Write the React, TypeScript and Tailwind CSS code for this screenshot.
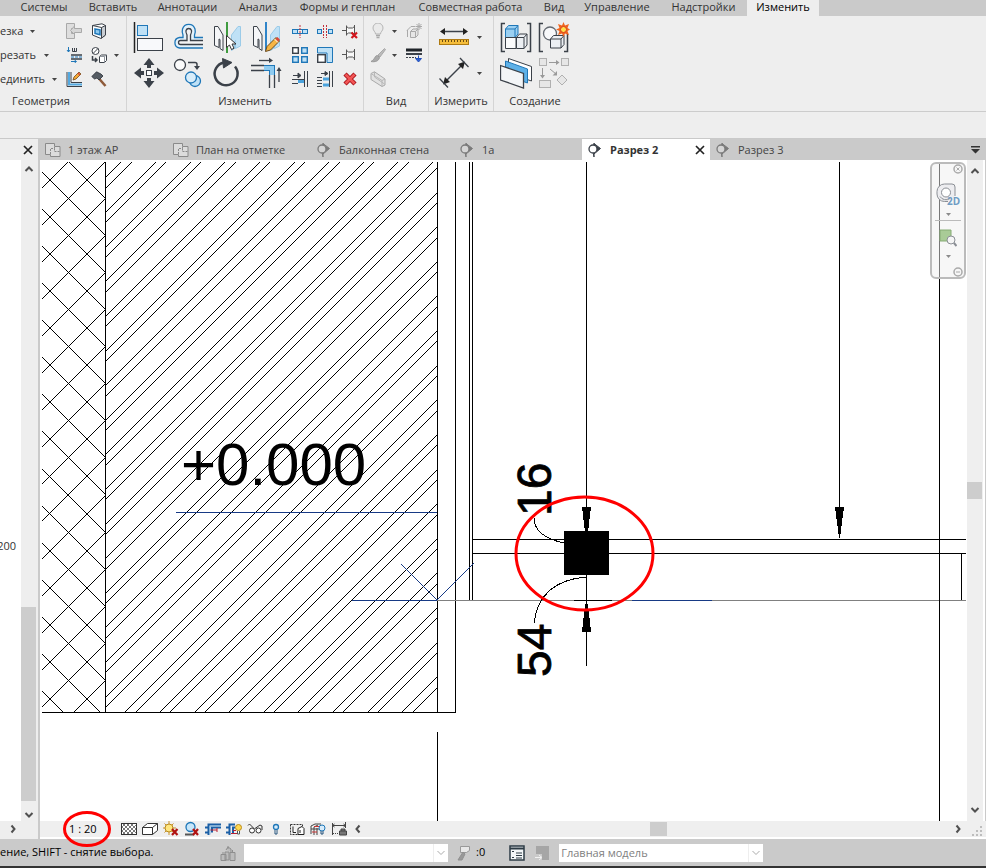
import type { ReactNode } from "react";

const ribbonTabs = [
  { label: "Системы", width: "w-[70px]" },
  { label: "Вставить", width: "w-[68px]" },
  { label: "Аннотации", width: "w-[81px]" },
  { label: "Анализ", width: "w-[60px]" },
  { label: "Формы и генплан", width: "w-[119px]" },
  { label: "Совместная работа", width: "w-[127px]" },
  { label: "Вид", width: "w-[40px]" },
  { label: "Управление", width: "w-[86px]" },
  { label: "Надстройки", width: "w-[87px]" },
  { label: "Изменить", width: "w-[72px]", active: true },
];

const viewTabs = [
  { label: "1 этаж АР", kind: "plan", width: "w-[128px]" },
  { label: "План на отметке", kind: "plan", width: "w-[143px]" },
  { label: "Балконная стена", kind: "section", width: "w-[143px]" },
  { label: "1а", kind: "section", width: "w-[128px]" },
  { label: "Разрез 2", kind: "section", width: "w-[128px]", active: true },
  { label: "Разрез 3", kind: "section", width: "w-[128px]" },
];

const INK = "#3b4149";
const BLUE = "#1f77b8";
const SKY = "#bfe1f6";
const GREY = "#a9a9a9";

function Icon({ size = 16, children }: { size?: number; children: ReactNode }) {
  return (
    <svg
      width={size}
      height={size}
      viewBox={`0 0 ${size} ${size}`}
      fill="none"
      stroke={INK}
      className="block shrink-0"
      aria-hidden="true"
    >
      {children}
    </svg>
  );
}

function Tool({ label, children }: { label: string; children: ReactNode }) {
  return (
    <button type="button" aria-label={label} title={label} className="block shrink-0">
      {children}
    </button>
  );
}

function Caret() {
  return (
    <svg width="5" height="3" viewBox="0 0 5 3" className="block shrink-0" aria-hidden="true">
      <path d="M0 0h5L2.5 3z" fill="#444" />
    </svg>
  );
}

function Chevron({ dir }: { dir: "up" | "down" | "left" | "right" }) {
  const paths = {
    up: "M1.5 7 5 3.5 8.5 7",
    down: "M1.5 3 5 6.5 8.5 3",
    left: "M6.5 1.5 3.5 5l3 3.5",
    right: "M3.5 1.5 6.5 5l-3 3.5",
  };
  return (
    <svg width="10" height="10" viewBox="0 0 10 10" fill="none" className="block shrink-0" aria-hidden="true">
      <path d={paths[dir]} stroke="#505050" strokeWidth="2" />
    </svg>
  );
}

/* ---------- ribbon icons, 16px ---------- */

const CutProfile = () => (
  <Icon>
    <path d="M.5.500h8v5h-3v5h3v5h-8z" fill="#dedede" stroke={GREY} />
    <path d="M8.5 5.500V3l-4 4.500 4 4V9.500h7v-4z" fill="#d6d6d6" stroke={GREY} />
  </Icon>
);

const Cope = () => (
  <Icon>
    <path d="M1.5 2.500 11 .8l3.500 1.700v9.500L10 15.500 1.500 12z" fill="#fff" />
    <path d="m10.500 4.500 4-2V12L10.500 15.200z" fill="#c9ced4" />
    <path d="m1.500 2.500 9 2" />
    <path d="m4 6 5 .8v5L4 10.500z" fill="#8cc8ee" stroke={BLUE} strokeWidth="1.5" />
  </Icon>
);

const WallJoins = () => (
  <Icon>
    <path d="M2.500 0v5M1 3l1.500 2L4 3" stroke={BLUE} />
    <path d="M6.500 1v3.500h4V1M8.500 1v3" />
    <path d="M5 8h11M5 12h11" strokeWidth="1.5" />
    <path d="M5 10h11" stroke={BLUE} strokeDasharray="3 1" />
    <path d="M5 14.500h5M8.500 13l2 1.500-2 1.500" stroke={BLUE} />
  </Icon>
);

const BeamJoins = () => (
  <Icon>
    <circle cx="4.5" cy="4" r="3.5" fill="#fff" />
    <path d="m2 6.500 5-5" />
    <path d="M1.500 9v4h4M4 11l2 2-2 2" strokeWidth="1.5" />
    <path d="M8.500 9.500 10.500 8h5v5.500l-2 2h-5z" fill="#fff" />
    <path d="M8.500 9.500h5v6m0-6 2-1.500" stroke="#8f959c" />
  </Icon>
);

const PaintJoin = () => (
  <Icon>
    <path d="M1 1v14.500h15M5 1v10.500h11" />
    <path d="M3 1v12.500h13" stroke="#54a9e0" strokeWidth="2" />
    <path d="m7 9 1-3 5-5 2 2-5 5z" fill="#f6a836" stroke="#6d4a1b" strokeWidth=".8" />
    <path d="m12 2 2 2" stroke="#d9463b" strokeWidth="1.5" />
  </Icon>
);

const Hammer = () => (
  <Icon>
    <path d="m7.500 7 7 8" stroke="#8e5a3a" strokeWidth="2.5" />
    <path d="M.8 5.500 5.500.8 10 3l2 2-4 4-2-2-2.500 1z" fill="#555c64" stroke="#2c3138" strokeWidth=".8" />
  </Icon>
);

const SplitElement = () => (
  <Icon>
    <rect x=".5" y="6.500" width="5" height="4" fill={SKY} stroke={BLUE} />
    <rect x="10.500" y="6.500" width="5" height="4" fill={SKY} stroke={BLUE} />
    <path d="M6 6.500h4M6 10.500h4" stroke={BLUE} />
    <path d="M8 2v13" stroke="#c2313c" strokeDasharray="2 1" />
  </Icon>
);

const SplitGap = () => (
  <Icon>
    <rect x=".5" y="6.500" width="4" height="4" fill={SKY} stroke={BLUE} />
    <rect x="11.500" y="6.500" width="4" height="4" fill={SKY} stroke={BLUE} />
    <path d="M6.500 2v13M9.500 2v13" stroke="#c2313c" strokeDasharray="2 1" />
  </Icon>
);

const Pin = ({ off }: { off?: boolean }) => (
  <Icon>
    <path d="M0 7.500h4" stroke="#555" />
    <path d="M4.500 3.500v8l2-1.500h4l2 1.500v-8l-2 1.500h-4z" fill="#f8f8f8" stroke="#555" />
    <path d="M4.500 2.500v10M12.500 2v11" stroke="#555" />
    {off && <path d="m9.500 9.500 5.500 5.500m0-5.500L9.500 15" stroke="#d2161e" strokeWidth="2.2" />}
  </Icon>
);

const ArrayIcon = () => (
  <Icon>
    <rect x=".7" y=".7" width="5.600" height="5.600" fill="#fff" strokeWidth="1.4" />
    <g fill={SKY} stroke={BLUE} strokeWidth="1.4">
      <rect x="9.700" y=".7" width="5.600" height="5.600" />
      <rect x=".7" y="9.700" width="5.600" height="5.600" />
      <rect x="9.700" y="9.700" width="5.600" height="5.600" />
    </g>
  </Icon>
);

const Scale = () => (
  <Icon>
    <path d="M.5.500h15v15H10V6H.5z" fill={SKY} stroke={BLUE} />
    <rect x=".7" y="7.700" width="7.600" height="7.600" fill="#fff" strokeWidth="1.4" />
  </Icon>
);

const TrimSingle = () => (
  <Icon>
    <path d="M1 4.500h6M6 2l3 2.500L6 7z" fill={INK} />
    <path d="M12.500 0v16M15.500 0v16" />
    <path d="M0 8.500h12M0 12.500h6" />
    <path d="M6 10.500h6" stroke="#4ba3dd" strokeWidth="3" />
  </Icon>
);

const TrimMultiple = () => (
  <Icon>
    <path d="M4 2.500h5M8 .5l3 2-3 2z" fill={INK} />
    <path d="M12.500 0v16M15.500 0v16" />
    <path d="M0 6.500h5M0 9.500h5M0 12.500h5M0 15.500h5" />
    <path d="M6 8h6M6 14h6" stroke="#4ba3dd" strokeWidth="3" />
  </Icon>
);

const Delete = () => (
  <Icon>
    <path d="m3 3 10 10M13 3 3 13" stroke="#a9131a" strokeWidth="4.500" />
    <path d="m3.500 3.500 9 9m0-9-9 9" stroke="#f25555" strokeWidth="2.500" />
  </Icon>
);

const Bulb = () => (
  <Icon>
    <path d="M5.500 11C5.500 8.500 3 8 3 5a5 5 0 0 1 10 0c0 3-2.500 3.500-2.500 6z" fill="#eaeaea" stroke="#b5b5b5" />
    <path d="M6 12.500h4M6.500 14.500h3" stroke={GREY} strokeWidth="1.5" />
  </Icon>
);

const DisplaceCube = () => (
  <Icon>
    <path d="M4.500 8.500 7 6h5v6l-2.500 2.500h-5zM4.500 8.500h5v6m0-6L12 6" fill="#e6e6e6" stroke={GREY} />
    <path d="M1.500 7v7M1 7.500 5 3.500h4" stroke={GREY} />
    <path d="M13 0v7M9.500 3.500h7M10.500 1l5 5m0-5-5 5" stroke={GREY} />
  </Icon>
);

const Brush = () => (
  <Icon>
    <path d="M14.500 1.500 8 8l2 2 5.500-7.500z" fill="#bbb" stroke={GREY} />
    <path d="M7.500 8.500c-3 0-2 3.500-6.500 6 4 .8 8-.5 8.500-4z" fill="#aaa" stroke="#999" />
  </Icon>
);

const Linework = () => (
  <Icon>
    <path d="M0 3h16" stroke="#1f2328" strokeWidth="3" />
    <path d="M0 7h16" strokeWidth="2" />
    <path d="M0 10.500h10" strokeDasharray="2 1" />
    <path d="M12.500 8.500v4M9.500 11.500h6l-3 3.500z" fill="#2e63d8" stroke="#2450b8" />
  </Icon>
);

const HiddenBlock = () => (
  <Icon>
    <path d="M1 2.500 4.500.8 15 8v6l-3 1.500L1 8.500z" fill="#e2e2e2" stroke={GREY} />
    <path d="M1 2.500 12 9.500v6M12 9.500 15 8M4.500 1v5l10 7" stroke="#b7b7b7" />
  </Icon>
);

/* ---------- ribbon icons, 32px ---------- */

const Align = () => (
  <Icon size={32}>
    <path d="M1.500 1v31" stroke="#222" strokeWidth="1.5" />
    <rect x="4.500" y="4.500" width="10" height="10" fill={SKY} stroke={BLUE} />
    <rect x="4.500" y="17.500" width="25" height="12" fill="#f8f9fb" />
  </Icon>
);

const Offset = () => (
  <Icon size={32}>
    <path
      d="M31 16.500h-8.500V14c1-2 1-4 .5-6a6.500 6.500 0 0 0-12.500 0c-.5 2-.5 4 .5 6v2.500H7.500a5.300 5.300 0 0 0 0 10.500H31"
      fill="#e4f2fb"
      stroke={BLUE}
      strokeWidth="1.3"
    />
    <path
      d="M31 19.500H18.500V14c1-2 1.300-3.500 1-4.500a2.900 2.900 0 0 0-5.500 0c-.3 1 0 2.500 1 4.500v5.500H8.500a2 2 0 0 0 0 4H31"
      fill="#f3f3f4"
      strokeWidth="1.3"
    />
  </Icon>
);

const mirrorLeft = "M3.500 5.500H7l5 8.500V29.500l-3-2v-9l-1-.5v8.500l-4.500-2z";
const mirrorRight = "M29.500 5.500H27l-6.500 8.500v15.500l3-2v-7l1-1v8l5-2.500z";

const MirrorPick = () => (
  <Icon size={32}>
    <path d={mirrorLeft} fill="#f5f6f8" />
    <path d={mirrorRight} fill={SKY} stroke="#9bcbe8" />
    <path d="M16 1v31" stroke="#3f9b3f" strokeWidth="2" />
    <path d="M15.500 14.500v12l3-2.500 2 4.500 2.500-1.200-2-4.300h4z" fill="#fff" stroke="#333" />
  </Icon>
);

const MirrorDraw = () => (
  <Icon size={32}>
    <path d={mirrorLeft} fill="#f5f6f8" />
    <path d={mirrorRight} fill={SKY} stroke="#9bcbe8" />
    <path d="M16 1v29" stroke="#2f84c9" strokeWidth="2" />
    <path d="m15.500 30.500 1.500-5 9-9 3.500 3.500-9 9z" fill="#f6b544" stroke="#6d4a1b" />
    <path d="m24.500 18 3.500 3.500" stroke="#fff" />
    <path d="m26.500 17 2.500 2.500" stroke="#d9463b" strokeWidth="2.500" />
  </Icon>
);

const Move = () => (
  <Icon size={32}>
    <g fill={INK} stroke="none">
      <path d="m16 1 5.500 7h-11zM16 31l5.500-7h-11zM1 16l7-5.500v11zM31 16l-7-5.500v11z" />
      <path d="M14 7h4v4h-4zM14 21h4v4h-4zM7 14h4v4H7zM21 14h4v4h-4z" />
    </g>
    <rect x="13.500" y="13.500" width="5" height="5" fill="#fff" />
  </Icon>
);

const Copy = () => (
  <Icon size={32}>
    <circle cx="8" cy="8" r="5.500" fill="#fbfbfb" strokeWidth="1.3" />
    <path d="M16 5.500h7q2 0 2 2v2" strokeWidth="1.5" />
    <path d="M22 9h6l-3 4z" fill={INK} stroke="none" />
    <circle cx="23" cy="24" r="5.500" fill={SKY} stroke={BLUE} strokeWidth="1.3" />
    <circle cx="19" cy="20.500" r="5.500" fill="#d8edfa" stroke={BLUE} strokeWidth="1.3" />
  </Icon>
);

const Rotate = () => (
  <Icon size={32}>
    <path d="M24 9.500a11.500 11.500 0 1 1-11-4" strokeWidth="2.500" />
    <path d="m11.500 1.500 9.500 4-8.500 5.500z" fill={INK} />
  </Icon>
);

const TrimCorner = () => (
  <Icon size={32}>
    <path d="M9 3.500h11" strokeWidth="1.3" />
    <path d="m19 .8 4 2.700L19 6z" fill={INK} stroke="none" />
    <path d="M1 8.500h13M1 13.500h13M19.500 18v13M24.500 18v13" strokeWidth="1.3" />
    <path d="M14 11h8v7" stroke={BLUE} strokeWidth="6" />
    <path d="M14 11h8v7" stroke="#8fcbf0" strokeWidth="4" />
    <path d="M29 25V13" strokeWidth="1.3" />
    <path d="m26.500 14 2.500-4 2.500 4z" fill={INK} stroke="none" />
  </Icon>
);

const Measure = () => (
  <Icon size={32}>
    <path d="M4 10.500h24" strokeWidth="1.5" />
    <path d="m2 10.500 5-3.500v7zM30 10.500 25 7v7z" fill="#222" stroke="none" />
    <rect x="1.500" y="18.500" width="29" height="5" fill="#f5bd3b" stroke="#ae7a12" />
    <path d="M4.500 19v2M7.500 19v2M10.500 19v2M13.500 19v2M16.500 19v2M19.500 19v2M22.500 19v2M25.500 19v2M28.500 19v2" stroke="#6b4c10" />
  </Icon>
);

const AlignedDim = () => (
  <Icon size={32}>
    <path d="m7 25 18-18" strokeWidth="1.5" />
    <path d="M5 27.500 7 20l5 5zM27 4.500l-2 7.500-5-5z" fill="#222" stroke="none" />
    <path d="m1.500 21.500 8.500 9M22 1l8.500 9" strokeWidth="1.3" />
  </Icon>
);

const CreateAssembly = () => (
  <Icon size={32}>
    <path d="M5 2.500H1.500v28H5M27 2.500h3.500v28H27" strokeWidth="1.5" />
    <path d="m5.500 8 3-3.500H18v8.500l-3 3.500H5.500z" fill="#9bd0f2" stroke={BLUE} />
    <path d="M5.500 8H15v8.500M15 8l3-3.500" stroke={BLUE} />
    <path d="M5.500 16.500H16v11H5.500z" fill="#fafbfc" />
    <path d="m16.500 16.500 3-3.500h7.500v11l-3 3.500h-7.500zM16 16.500h8v11m0-11 3-3.500" fill="#eceff3" />
  </Icon>
);

const CreateGroup = () => (
  <Icon size={32}>
    <path d="M5 2.500H1.500v28H5M26 30.500h3.500V13" strokeWidth="1.5" />
    <circle cx="12" cy="12.500" r="6.500" fill="#f7f8fa" stroke="#626870" strokeWidth="1.3" />
    <path d="m12.500 18 3-3.500H26v9l-3 3.500H12.500zM12.500 18H23v9m0-9 3-3.500" fill="#eceff3" />
    <path
      d="m25.500 1 1.500 3.500 4-1.500-1.500 4 2.500 1.500-2.500 1.500 1.500 4-4-1.500-1.500 3.500-1.500-3.500-4 1.500 1.500-4-3.500-1.500 3.500-1.500-1.500-4 4 1.500z"
      fill="#f0641e"
      stroke="none"
    />
    <circle cx="25.500" cy="8.500" r="3" fill="#ffe04a" stroke="#d73a1d" />
  </Icon>
);

const CreateSimilar = () => (
  <Icon size={32}>
    <path d="m8.500 1.500 23 8V24l-23-8z" fill="#fff" />
    <path d="m5.500 4 22 8v14l-22-8z" fill="#5eb1e8" stroke={BLUE} />
    <path d="m.5 8.500 23 8V31l-23-8z" fill="#f3f5f7" strokeWidth="1.3" />
  </Icon>
);

const CreateParts = () => (
  <Icon size={32}>
    <g stroke="#b0b0b0" fill="#e6e6e6">
      <rect x="1.500" y="1.500" width="7" height="7" />
      <rect x="23.500" y="1.500" width="7" height="7" />
      <rect x="1.500" y="23.500" width="11" height="7" />
      <path d="m24 18 5 5-5 5-5-5z" />
    </g>
    <path d="M11 5.500h9M4.500 11v9M12 12l6 5" stroke="#999" />
    <path d="m18 3 3.500 2.500L18 8zM2 18l2.500 3.500L7 18zM14.500 18.500H19V14z" fill="#999" stroke="none" />
  </Icon>
);

/* ---------- view tab icons ---------- */

const PlanIcon = () => (
  <Icon>
    <path d="M.5 1.500h9v3h5.500v10H5.500v-2h-5z" fill="#dcdcdc" stroke="#8a8a8a" />
    <path d="M5.500 12V6.500h4V4M9.500 6.500v3H15" stroke="#8a8a8a" strokeDasharray="2 1" />
  </Icon>
);

const SectionIcon = ({ active }: { active?: boolean }) => (
  <Icon>
    <path d="M7 1v14l-.5-3M7 1.500l6.500 5L7 12z" fill={active ? INK : "#7a7a7a"} stroke={active ? INK : "#7a7a7a"} />
    <circle cx="6" cy="7" r="4" fill={active ? "#fff" : "#d5d5d5"} stroke={active ? INK : "#7a7a7a"} strokeWidth="1.3" />
  </Icon>
);

/* ---------- view control bar icons ---------- */

const viewControls: { label: string; icon: ReactNode }[] = [
  {
    label: "Уровень детализации",
    icon: (
      <Icon>
        <rect x=".5" y="2.500" width="15" height="11" fill="#fff" stroke="#333" />
        <path
          d="m1 6 3-3M1 10l7-7M2 13 12 3M6 13l9-9M10 13l5-5M1 10l3 3M1 6l7 7M2 3l10 10M6 3l9 9M10 3l5 5"
          stroke="#555"
          strokeWidth=".8"
        />
      </Icon>
    ),
  },
  {
    label: "Визуальный стиль",
    icon: (
      <Icon>
        <path d="m.5 6.500 5-4h10v7l-5 4H.5z" fill="#fff" stroke="#333" />
        <path d="M.5 6.500h10v7m0-7 5-4" stroke="#333" />
      </Icon>
    ),
  },
  {
    label: "Солнце",
    icon: (
      <Icon>
        <path d="M6 0v14M0 7h13M1.500 2.500l9 9M10.500 2.500l-9 9" stroke="#c9912a" />
        <circle cx="6" cy="7" r="4" fill="#ffe680" stroke="#b88a1c" />
        <path d="m9 8 5.500 6m0-6L9 14" stroke="#b01313" strokeWidth="2.2" />
      </Icon>
    ),
  },
  {
    label: "Тени",
    icon: (
      <Icon>
        <path d="M1 13.500h9" stroke="#555" strokeWidth="2" />
        <circle cx="6.500" cy="6" r="4.500" fill="#c7e6fa" stroke={BLUE} strokeWidth="1.3" />
        <path d="m9 8 5 6m0-6-5 6" stroke="#b01313" strokeWidth="2.2" />
      </Icon>
    ),
  },
  {
    label: "Подрезать вид",
    icon: (
      <Icon>
        <path d="M3.500 14V3.500H16M7 11.500v-5h9M0 6.500h3M0 11.500h3" stroke="#1b5fa6" strokeWidth="2" />
        <path d="M5 9h7M12 7v4" stroke="#b23" />
        <path d="M5 13.500V5h11" stroke="#7fb6df" />
      </Icon>
    ),
  },
  {
    label: "Показать границу подрезки",
    icon: (
      <Icon>
        <path d="M3.500 14V3.500H9M7 12V6.500h2M0 6.500h3M0 11.500h3" stroke="#1b5fa6" strokeWidth="2" />
        <path d="M7 9.500h3M5 12.500h6" stroke="#b23" />
        <circle cx="12.500" cy="6.500" r="3" fill="#ffd84f" stroke="#b88a1c" />
        <path d="M11.500 10v3h2v-3" fill="#fff" stroke="#555" />
      </Icon>
    ),
  },
  {
    label: "Временное скрытие",
    icon: (
      <Icon>
        <path d="M1 4.500 2.500 3l5 5M8 7.500l5-3.500 2 1v4" stroke="#333" />
        <circle cx="5" cy="9.500" r="2.500" fill="#fff" stroke="#333" />
        <circle cx="11.500" cy="9.500" r="2.500" fill="#fff" stroke="#333" />
      </Icon>
    ),
  },
  {
    label: "Показать скрытые элементы",
    icon: (
      <Icon>
        <circle cx="8" cy="6" r="2.500" fill="#d7ecfb" stroke={BLUE} strokeWidth="1.3" />
        <path d="M7 9v4h2V9" fill="#fff" stroke="#24527a" />
      </Icon>
    ),
  },
  {
    label: "Временные свойства вида",
    icon: (
      <Icon>
        <rect x="1.500" y="3.500" width="12" height="10" stroke="#333" strokeDasharray="2 1" />
        <path d="M4 5.500v6h3M13 5.500l-4 2v6h6v-6z" fill="#fff" stroke="#222" />
        <path d="M11 9v3" stroke="#222" />
      </Icon>
    ),
  },
  {
    label: "Аналитическая модель",
    icon: (
      <Icon>
        <path d="M1 13V5l4-2h6M4 14V6l4-2M1 8h8M7 14V7" stroke="#444" />
        <path d="M2 11h5M4 5.500h6" stroke="#c33" />
        <circle cx="12" cy="7" r="3" fill="#d7ecfb" stroke={BLUE} />
        <path d="M11 10v3h2v-3" stroke="#24527a" />
      </Icon>
    ),
  },
  {
    label: "Показать зависимости",
    icon: (
      <Icon>
        <path d="M1.500 2v12M14.500 1v6M1 4.500h14M3.500 3 1.500 4.500l2 1.500M12.500 3l2 1.500-2 1.500" stroke="#444" />
        <path d="M2 12.500h6" stroke="#444" strokeDasharray="1 1" />
        <path d="M8.500 10h7v4h-7zM10 10V8h4v2" fill="#777" stroke="#444" />
      </Icon>
    ),
  },
];

function RibbonGroup({ title, children, last }: { title: string; children: ReactNode; last?: boolean }) {
  return (
    <section className={last ? "flex flex-col px-1" : "flex flex-col border-r border-[#d4d4d4] px-1"}>
      <div className="flex h-[77px] items-start pt-[3px]">{children}</div>
      <h2 className="text-center leading-4">{title}</h2>
    </section>
  );
}

function Ribbon() {
  return (
    <header className="shrink-0 bg-[#eeeeee]">
      <nav className="flex h-4 bg-[#cacaca] pl-[9px]">
        {ribbonTabs.map((t) => (
          <button
            key={t.label}
            type="button"
            className={`${t.width} h-4 shrink-0 pb-0.5 text-center leading-3 whitespace-nowrap ${t.active ? "bg-[#eeeeee] text-black" : ""}`}
          >
            {t.label}
          </button>
        ))}
      </nav>

      <div className="flex h-24 border-b border-[#cccccc]">
        <section className="w-[127px] border-r border-[#d4d4d4]">
          <div className="flex h-[77px] pt-[3px]">
            <div className="flex w-[66px] flex-col">
              <button type="button" className="flex h-6 items-center gap-2 leading-4">
                <span className="w-[22px] text-left">езка</span> <Caret />
              </button>
              <button type="button" className="flex h-6 items-center gap-2 leading-4">
                <span className="flex w-9 justify-end overflow-hidden">ырезать</span> <Caret />
              </button>
              <button type="button" className="flex h-6 items-center gap-2 leading-4">
                <span className="w-11 text-left">единить</span> <Caret />
              </button>
            </div>
            <div className="grid auto-rows-[24px] grid-cols-[25px_auto] items-center">
              <Tool label="Торцевая подрезка"><CutProfile /></Tool>
              <Tool label="Вырез"><Cope /></Tool>
              <Tool label="Соединение стен"><WallJoins /></Tool>
              <div className="flex items-center gap-[7px]">
                <Tool label="Соединение балок"><BeamJoins /></Tool>
                <Caret />
              </div>
              <Tool label="Краска"><PaintJoin /></Tool>
              <Tool label="Снос"><Hammer /></Tool>
            </div>
          </div>
          <h2 className="pl-3 leading-4">Геометрия</h2>
        </section>

        <RibbonGroup title="Изменить">
          <div className="grid auto-rows-[36px] grid-cols-[repeat(4,39px)] pl-[2px]">
            <Tool label="Выровнять"><Align /></Tool>
            <Tool label="Сместить"><Offset /></Tool>
            <Tool label="Зеркало, выбрать ось"><MirrorPick /></Tool>
            <Tool label="Зеркало, нарисовать ось"><MirrorDraw /></Tool>
            <Tool label="Переместить"><Move /></Tool>
            <Tool label="Копировать"><Copy /></Tool>
            <Tool label="Повернуть"><Rotate /></Tool>
            <Tool label="Обрезать до угла"><TrimCorner /></Tool>
          </div>
          <div className="grid auto-rows-[24px] grid-cols-[25px_25px_17px] items-center pl-[3px]">
            <Tool label="Разделить"><SplitElement /></Tool>
            <Tool label="Разделить с зазором"><SplitGap /></Tool>
            <Tool label="Открепить"><Pin off /></Tool>
            <Tool label="Массив"><ArrayIcon /></Tool>
            <Tool label="Масштаб"><Scale /></Tool>
            <Tool label="Закрепить"><Pin /></Tool>
            <Tool label="Обрезать один"><TrimSingle /></Tool>
            <Tool label="Обрезать несколько"><TrimMultiple /></Tool>
            <Tool label="Удалить"><Delete /></Tool>
          </div>
        </RibbonGroup>

        <RibbonGroup title="Вид">
          <div className="grid auto-rows-[24px] grid-cols-[36px_18px] items-center pl-[2px]">
            <div className="flex items-center gap-[6px]">
              <Tool label="Скрыть на виде"><Bulb /></Tool>
              <Caret />
            </div>
            <Tool label="Сместить элементы"><DisplaceCube /></Tool>
            <div className="flex items-center gap-[6px]">
              <Tool label="Переопределить графику"><Brush /></Tool>
              <Caret />
            </div>
            <Tool label="Тип линий"><Linework /></Tool>
            <Tool label="Рамка выбора"><HiddenBlock /></Tool>
          </div>
        </RibbonGroup>

        <RibbonGroup title="Измерить">
          <div className="grid auto-rows-[36px] grid-cols-1 pr-[7px] pl-[5px]">
            <div className="flex items-center gap-[7px]">
              <Tool label="Измерить"><Measure /></Tool>
              <Caret />
            </div>
            <div className="flex items-center gap-[7px]">
              <Tool label="Параллельный размер"><AlignedDim /></Tool>
              <Caret />
            </div>
          </div>
        </RibbonGroup>

        <RibbonGroup title="Создание" last>
          <div className="grid auto-rows-[36px] grid-cols-[38px_34px] pl-[2px]">
            <Tool label="Создать сборку"><CreateAssembly /></Tool>
            <Tool label="Создать группу"><CreateGroup /></Tool>
            <Tool label="Создать аналогичные"><CreateSimilar /></Tool>
            <Tool label="Создать части"><CreateParts /></Tool>
          </div>
        </RibbonGroup>
      </div>
      <div className="h-[26px]" />
    </header>
  );
}

function CloseMark() {
  return (
    <svg width="10" height="10" viewBox="0 0 10 10" className="block" aria-hidden="true">
      <path d="m1 1 8 8M9 1 1 9" stroke="#222" strokeWidth="1.700" />
    </svg>
  );
}

function LeftPane() {
  return (
    <aside className="flex w-[38px] shrink-0 flex-col bg-[#eeeeee]">
      <div className="flex h-[21px] items-center justify-end pr-[5px]">
        <button type="button" aria-label="Закрыть панель"><CloseMark /></button>
      </div>
      <div className="flex min-h-0 flex-1">
        <div className="flex w-[21px] items-center justify-end overflow-hidden bg-white pt-[112px] pr-[5px]">
          <span>200</span>
        </div>
        <div className="mr-[2px] flex flex-1 flex-col items-center justify-between pt-1 pb-px">
          <Chevron dir="up" />
          <div className="flex w-full flex-1 flex-col justify-end pt-[10px] pb-[9px]">
            <div className="h-[194px] bg-[#cdcdcd]" />
          </div>
          <Chevron dir="down" />
        </div>
      </div>
      <div className="mb-[2px] flex h-4 items-center pl-2">
        <Chevron dir="right" />
      </div>
    </aside>
  );
}

function ViewTabs() {
  return (
    <div className="flex h-[21px] shrink-0 bg-[#cacaca]">
      {viewTabs.map((t) => (
        <div
          key={t.label}
          className={`${t.width} flex shrink-0 items-center pt-px pl-[5px] ${t.active ? "bg-white font-bold text-[#333]" : "text-[#444]"}`}
        >
          <button type="button" className="flex items-center gap-[7px] leading-4 whitespace-nowrap">
            {t.kind === "plan" ? <PlanIcon /> : <SectionIcon active={t.active} />}
            {t.label}
          </button>
          {t.active && (
            <button type="button" aria-label="Закрыть вид" className="mr-[5px] ml-auto">
              <CloseMark />
            </button>
          )}
        </div>
      ))}
      <button type="button" aria-label="Список видов" className="mr-[6px] ml-auto self-center">
        <svg width="9" height="8" viewBox="0 0 9 8" aria-hidden="true">
          <path d="M0 0h9v1.500H0zM0 3h9L4.500 7.500z" fill="#333" />
        </svg>
      </button>
    </div>
  );
}

// offsets are rounded so that every 45° line runs through pixel centres
const insulation = Array.from({ length: 19 }, (_, k) => Math.round(k * 37.05));
const brick = Array.from({ length: 26 }, (_, k) => k * 34.62).flatMap((s) => [
  Math.round(s + 79.4),
  Math.round(s + 89.8),
]);

function Drawing() {
  return (
    <svg className="block h-full w-full" stroke="#000" fill="none" shapeRendering="crispEdges">
      <defs>
        <clipPath id="insulation"><rect x="0" y="0" width="63" height="550" /></clipPath>
        <clipPath id="brick"><rect x="64" y="0" width="331" height="550" /></clipPath>
      </defs>

      {/* wall hatches */}
      <g clipPath="url(#insulation)">
        {insulation.map((s) => (
          <g key={s}>
            <line x1="0" y1={s - 64} x2="64" y2={s} />
            <line x1="0" y1={s + 26} x2="64" y2={s - 38} />
          </g>
        ))}
      </g>
      <g clipPath="url(#brick)">
        {brick.map((s) => (
          <line key={s} x1="64" y1={s - 64} x2="395" y2={s - 395} />
        ))}
      </g>

      {/* wall and slab outlines */}
      <path d="M63.500 0v550M395.500 0v550M413.500 0v551M0 550.500h414M427.500 0v438M430.500 0v438" />
      <line x1="395.5" y1="570" x2="395.5" y2="100%" />
      <line x1="430" y1="377.5" x2="100%" y2="377.5" />
      <line x1="430" y1="391.5" x2="100%" y2="391.5" />
      <line x1="395" y1="438.5" x2="100%" y2="438.5" stroke="#808080" />
      <line x1="897.5" y1="0" x2="897.5" y2="100%" />
      <path d="M919.500 391v47M532 438.500h38" />

      {/* level mark */}
      <path d="M134 350.500h261M310 438.500h85M590 438.500h80M359 402l36 36 37-37" stroke="#173a85" />
      <text x="139" y="323" fontSize="60" fill="#000" stroke="none" fontFamily="Liberation Sans, sans-serif">
        +0.000
      </text>

      {/* dimensions */}
      <path d="M544.500 0v504M797.500 0v376" />
      <g fill="#000" stroke="none">
        <path d="M540 345h9l-3 25h-3zM543 442h3l3 28h-9zM793 345h9l-4 31h-1z" />
        <rect x="522" y="369" width="45" height="44" />
      </g>
      <g fill="#000" strokeWidth=".8" fontSize="48" fontFamily="Liberation Sans, sans-serif">
        <text transform="translate(509 354) rotate(-90)">16</text>
        <text transform="translate(509 515) rotate(-90)">54</text>
      </g>
      <path d="M492 356c0 14 12 21 30 25M544 415c-34 3-49 21-52 46" />
      <ellipse cx="542.5" cy="391.5" rx="68.5" ry="56.5" stroke="#f00" strokeWidth="3" shapeRendering="auto" />
    </svg>
  );
}

function NavBar() {
  return (
    <div className="absolute top-[2px] right-0 flex h-[117px] w-9 flex-col items-center rounded-md border-2 border-[#bbbbbb] bg-[#f0f0f0]/50">
      <button type="button" aria-label="Закрыть панель навигации" className="mr-px self-end">
        <svg width="10" height="10" viewBox="0 0 10 10" fill="none" stroke="#aaa" className="block">
          <circle cx="5" cy="5" r="4" strokeWidth="1.500" />
          <path d="m3.500 3.500 3 3m0-3-3 3" />
        </svg>
      </button>
      <button type="button" aria-label="Штурвал 2D" className="mt-2">
        <svg width="26" height="24" viewBox="0 0 26 24" fill="none" stroke="#8b8f95" className="block">
          <path d="M13 19.500H9.500A7.500 7.500 0 0 1 2 12V9.500A7.500 7.500 0 0 1 9.500 2H17a3 3 0 0 1 3 3v9" fill="#ededf0" />
          <path d="M5 14.500a7 7 0 0 0 10 2" />
          <circle cx="11" cy="10.500" r="4.500" fill="#fff" />
          <text x="12" y="23" fontSize="10" fontWeight="700" fill="#6f9cc4" stroke="none" fontFamily="Open Sans, sans-serif">
            2D
          </text>
        </svg>
      </button>
      <div className="mt-[7px] opacity-60"><Caret /></div>
      <div className="mt-1 w-[26px] border-t border-[#bbbbbb]" />
      <button type="button" aria-label="Зум области" className="mt-2">
        <svg width="18" height="18" viewBox="0 0 18 18" fill="none" className="block">
          <path d="M1 1h11v11H1z" fill="#a9cb97" stroke="#86ac74" />
          <circle cx="12" cy="11" r="4" fill="#f5f5f5" stroke="#8b8f95" />
          <path d="m15 14 2.500 3" stroke="#8b8f95" strokeWidth="2" />
        </svg>
      </button>
      <div className="mt-2 opacity-60"><Caret /></div>
      <button type="button" aria-label="Параметры панели" className="mt-auto mr-px self-end">
        <svg width="10" height="10" viewBox="0 0 10 10" fill="none" stroke="#aaa" className="block">
          <circle cx="5" cy="5" r="4" strokeWidth="1.500" />
          <path d="M3 5h4" />
        </svg>
      </button>
    </div>
  );
}

function ViewControlBar() {
  return (
    <div className="mb-[2px] flex h-4 shrink-0 items-center bg-[#efefef]">
      <div className="relative ml-[29px] w-[38px]">
        <button type="button" aria-label="Масштаб вида" className="block w-full text-left leading-4 whitespace-nowrap text-black">
          1 : 20
        </button>
        <svg
          width="48"
          height="36"
          viewBox="0 0 48 36"
          fill="none"
          className="pointer-events-none absolute -top-[10px] -left-[6px] z-10"
        >
          <ellipse cx="24" cy="18" rx="22.5" ry="16.5" stroke="#f00" strokeWidth="3" />
        </svg>
      </div>
      <div className="ml-[14px] flex gap-[5px]">
        {viewControls.map((c) => (
          <Tool key={c.label} label={c.label}>{c.icon}</Tool>
        ))}
      </div>
      <div className="flex h-full flex-1 items-center justify-between pr-[5px] pl-[6px]">
        <Chevron dir="left" />
        <div className="h-[14px] w-[17px] bg-[#cdcdcd]" />
        <Chevron dir="right" />
      </div>
      <svg width="18" height="16" viewBox="0 0 18 16" fill="#bdbdbd" className="block" aria-hidden="true">
        <path d="M12 5h2v2h-2zM12 9h2v2h-2zM12 13h2v2h-2zM8 9h2v2H8zM8 13h2v2H8zM4 13h2v2H4z" />
      </svg>
    </div>
  );
}

function StatusSelect({ label, value }: { label: string; value: string }) {
  return (
    <label className="relative block">
      <span className="sr-only">{label}</span>
      <select className="block h-[18px] w-[204px] appearance-none bg-white pl-[2px] leading-4 text-[#808080]">
        <option>{value}</option>
      </select>
      <span className="pointer-events-none absolute top-0 right-0 flex h-full w-[15px] items-center justify-center border-l border-[#eeeeee]">
        <svg width="8" height="6" viewBox="0 0 8 6" fill="none">
          <path d="m.5 1 3.500 3.500L7.500 1" stroke="#aaa" />
        </svg>
      </span>
    </label>
  );
}

function StatusBar() {
  return (
    <footer className="flex h-[29px] shrink-0 items-center border-b-2 border-[#333] bg-[#cacaca]">
      <p className="w-[220px] whitespace-nowrap text-black">ение, SHIFT - снятие выбора.</p>
      <Tool label="Рабочие наборы">
        <Icon>
          <path d="M1 9.500h5v6H1zM6 5l2-3 3 2v3M10 7.500h5v8h-5zM5 7h4v8H5z" fill="#bcbcbc" stroke="#8e8e8e" />
          <path d="M8 1v3M3 7v2M12.500 5v2" stroke="#8e8e8e" />
        </Icon>
      </Tool>
      <div className="ml-2"><StatusSelect label="Рабочий набор" value="" /></div>
      <button type="button" aria-label="Запросы на редактирование" className="ml-2 flex items-center gap-1 text-black">
        <Icon>
          <path d="M4.500 1.500h9v4l-3 2h-6z" fill="#e8e8e8" stroke="#999" />
          <path d="M7 7 2 15h4l3-6z" fill="#999" stroke="#909090" />
        </Icon>
        :0
      </button>
      <div className="ml-6 flex items-center gap-[9px]">
        <Tool label="Варианты конструкции">
          <Icon>
            <rect x="1" y="1" width="14" height="14" fill="#f2f6f8" stroke="#2d3b45" strokeWidth="1.5" />
            <path d="M1 3.500h14" stroke="#2d3b45" strokeWidth="2" />
            <path d="M3 6.500h2M3 12.500h2M7 8h6M7 10.500h6M7 13h6" stroke="#2d3b45" />
          </Icon>
        </Tool>
        <Tool label="Добавить в набор">
          <Icon>
            <path d="M2 1h13v14H8V9H2z" fill="#a6a6a6" stroke="none" />
            <path d="M1 12.500h6M5 10l3 2.500L5 15" stroke="#f2f2f2" />
          </Icon>
        </Tool>
        <StatusSelect label="Вариант модели" value="Главная модель" />
      </div>
    </footer>
  );
}

export default function App() {
  return (
    <div className="flex h-screen flex-col overflow-hidden bg-[#eeeeee] font-['Open_Sans',sans-serif] text-[11px] text-[#333]">
      <Ribbon />
      <div className="flex min-h-0 flex-1 border-t border-[#c9c9c9]">
        <LeftPane />
        <main className="flex min-w-0 flex-1 flex-col border-l-2 border-[#cacaca] bg-white">
          <ViewTabs />
          <div className="flex min-h-0 flex-1 border-r border-[#cacaca] bg-white">
            <div className="relative min-w-0 flex-1 pt-[2px] pl-[2px]">
              <Drawing />
              <NavBar />
            </div>
            <div className="ml-px flex w-4 flex-col items-center bg-[#efefef] py-[6px]">
              <Chevron dir="up" />
              <div className="flex w-full flex-1 items-center">
                <div className="h-[17px] w-[15px] bg-[#cdcdcd]" />
              </div>
              <Chevron dir="down" />
            </div>
            <div className="w-[2px]" />
          </div>
          <ViewControlBar />
        </main>
      </div>
      <StatusBar />
    </div>
  );
}
